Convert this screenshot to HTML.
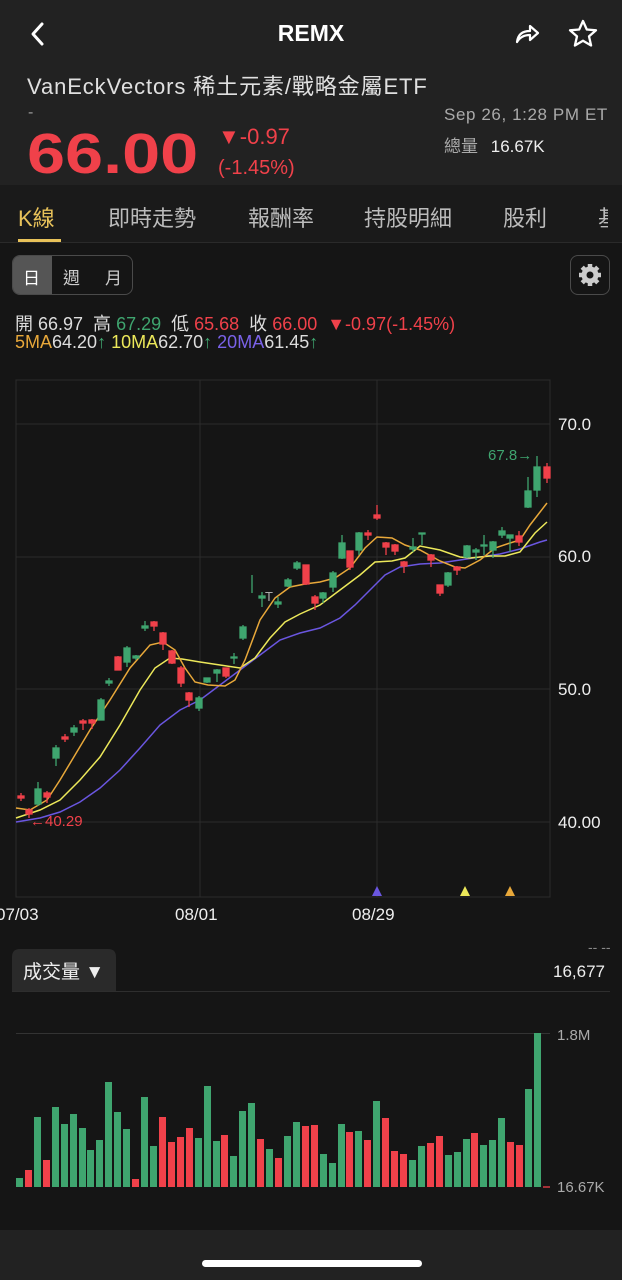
<!DOCTYPE html>
<html><head><meta charset="utf-8">
<style>
*{margin:0;padding:0;box-sizing:border-box}
body{width:622px;height:1280px;background:#151515;font-family:"Liberation Sans","Noto Sans CJK TC",sans-serif;color:#e6e6e6;position:relative;overflow:hidden}
.a{position:absolute;white-space:nowrap}
</style></head><body>
<div class="a" style="left:0;top:0;width:622px;height:185px;background:#222"></div>
<svg class="a" style="left:26px;top:20px" width="24" height="28" viewBox="0 0 24 28"><path d="M16 4 L7 14 L16 24" stroke="#fff" stroke-width="3" fill="none" stroke-linecap="round" stroke-linejoin="round"/></svg>
<div class="a" style="left:0;width:622px;text-align:center;top:20px;font-size:23px;font-weight:bold;color:#fff">REMX</div>
<svg class="a" style="left:513px;top:20px" width="28" height="28" viewBox="0 0 28 28"><path d="M4 22 C5 14 10 11 17 11 L17 6 L25 13 L17 20 L17 15 C11 15 7 17 4 22 Z" stroke="#fff" stroke-width="2.2" fill="none" stroke-linejoin="round"/></svg>
<svg class="a" style="left:567px;top:18px" width="32" height="32" viewBox="0 0 32 32"><path d="M16 3 L19.8 11.5 L29 12.3 L22 18.4 L24.1 27.5 L16 22.7 L7.9 27.5 L10 18.4 L3 12.3 L12.2 11.5 Z" stroke="#fff" stroke-width="2.3" fill="none" stroke-linejoin="round"/></svg>
<div class="a" style="left:27px;top:69px;font-size:22px;color:#e0e0e0;letter-spacing:0.9px">VanEckVectors 稀土元素/戰略金屬ETF</div>
<div class="a" style="left:28px;top:104px;font-size:16px;color:#999">-</div>
<div class="a" style="left:27px;top:121px;font-size:57px;font-weight:bold;color:#f0414a;transform:scaleX(1.2);transform-origin:left top">66.00</div>
<div class="a" style="left:218px;top:124px;font-size:22px;color:#f0414a">▼-0.97</div>
<div class="a" style="left:218px;top:157px;font-size:20px;color:#f0414a">(-1.45%)</div>
<div class="a" style="left:444px;top:105px;font-size:17px;color:#aaa;letter-spacing:0.6px">Sep 26, 1:28 PM ET</div>
<div class="a" style="left:444px;top:132px;font-size:17px;color:#aaa">總量 <span style="color:#eee;margin-left:8px">16.67K</span></div>
<div class="a" style="left:0;top:185px;width:622px;height:58px;background:#1a1a1a;border-bottom:1px solid #2a2a2a"></div>
<div class="a" style="left:18px;top:201px;font-size:22px;color:#e8c25a">K線</div>
<div class="a" style="left:18px;top:239px;width:43px;height:3px;background:#e8c25a"></div>
<div class="a" style="left:108px;top:201px;font-size:22px;color:#bbb">即時走勢</div>
<div class="a" style="left:248px;top:201px;font-size:22px;color:#bbb">報酬率</div>
<div class="a" style="left:364px;top:201px;font-size:22px;color:#bbb">持股明細</div>
<div class="a" style="left:503px;top:201px;font-size:22px;color:#bbb">股利</div>
<div class="a" style="left:598px;top:201px;font-size:22px;color:#bbb;width:10px;overflow:hidden">基</div>
<div class="a" style="left:12px;top:255px;width:121px;height:40px;border:1.5px solid #4a4a4a;border-radius:8px"></div>
<div class="a" style="left:13px;top:256px;width:39px;height:38px;background:#555;border-radius:7px 0 0 7px"></div>
<div class="a" style="left:23px;top:264px;font-size:17px;color:#fff">日</div>
<div class="a" style="left:63px;top:264px;font-size:17px;color:#ccc">週</div>
<div class="a" style="left:105px;top:264px;font-size:17px;color:#ccc">月</div>
<div class="a" style="left:570px;top:255px;width:40px;height:40px;border:1.5px solid #4a4a4a;border-radius:8px"></div>
<svg class="a" style="left:577px;top:262px" width="26" height="26" viewBox="0 0 26 26"><g fill="#ccc"><circle cx="13" cy="13" r="8.5"/><g stroke="#ccc" stroke-width="4.5"><line x1="13" y1="2" x2="13" y2="24"/><line x1="2" y1="13" x2="24" y2="13"/><line x1="5.2" y1="5.2" x2="20.8" y2="20.8"/><line x1="20.8" y1="5.2" x2="5.2" y2="20.8"/></g></g><circle cx="13" cy="13" r="3.5" fill="#151515"/></svg>
<div class="a" style="left:15px;top:310px;font-size:18px;color:#ddd">開 66.97 &nbsp;高 <span style="color:#3fa56f">67.29</span> &nbsp;低 <span style="color:#f0414a">65.68</span> &nbsp;收 <span style="color:#f0414a">66.00 &nbsp;▼-0.97(-1.45%)</span></div>
<div class="a" style="left:15px;top:332px;font-size:18px;color:#ddd"><span style="color:#e8a83a">5MA</span>64.20<span style="color:#3fa56f">↑</span> <span style="color:#ece85a">10MA</span>62.70<span style="color:#3fa56f">↑</span> <span style="color:#7a62e8">20MA</span>61.45<span style="color:#3fa56f">↑</span></div>

<svg class="a" style="left:0;top:0" width="622" height="1280" viewBox="0 0 622 1280">
<g stroke="#2c2c2c" stroke-width="1" fill="none">
<rect x="16" y="380" width="534" height="517"/>
<line x1="16" y1="424" x2="550" y2="424"/><line x1="16" y1="557" x2="550" y2="557"/><line x1="16" y1="689" x2="550" y2="689"/><line x1="16" y1="822" x2="550" y2="822"/>
<line x1="200" y1="380" x2="200" y2="897"/><line x1="377" y1="380" x2="377" y2="897"/>
</g>
<g font-size="17" fill="#eee" font-family="Liberation Sans,sans-serif">
<text x="558" y="430">70.0</text><text x="558" y="562">60.0</text><text x="558" y="695">50.0</text><text x="558" y="828">40.00</text>
<text x="-4" y="920">07/03</text><text x="175" y="920">08/01</text><text x="352" y="920">08/29</text>
<text x="553" y="977">16,677</text>
</g>
<text x="488" y="460" font-size="15" fill="#3fa56f" font-family="Liberation Sans,sans-serif">67.8→</text>
<text x="30" y="826" font-size="15" fill="#f0414a" font-family="Liberation Sans,sans-serif">←40.29</text>
<polygon points="372,896 377,886 382,896" fill="#6a56e0"/>
<polygon points="460,896 465,886 470,896" fill="#ece85a"/>
<polygon points="505,896 510,886 515,896" fill="#e8a83a"/>
<g fill="none" stroke-width="1.5">
<polyline stroke="#6a56e0" points="16,822 40,818 60,812 80,802 100,788 120,770 140,748 160,725 180,710 200,700 220,685 240,670 260,655 280,640 300,633 320,628 340,618 355,605 370,590 385,575 400,567 420,564 440,563 460,560 480,557 500,554 520,549 540,542 547,540"/>
<polyline stroke="#ece85a" points="16,818 40,810 60,800 80,780 100,757 120,725 140,690 155,668 170,658 182,659 200,662 220,665 240,668 255,658 270,638 285,622 300,614 320,605 340,590 360,575 375,562 392,561 405,558 420,546 440,550 460,557 470,558 490,556 505,556 520,552 535,533 547,522"/>
<polyline stroke="#e8a83a" points="16,808 30,810 47,800 60,780 75,755 90,730 110,700 130,668 150,645 163,642 175,650 185,668 195,682 208,685 225,686 235,680 245,660 260,620 275,598 290,587 305,584 320,582 335,578 350,568 365,548 377,537 392,538 405,545 420,550 440,561 455,567 465,568 480,560 495,548 510,543 520,540 530,525 547,503"/>
</g>
<g stroke="#3fa56f" stroke-width="1.3" fill="#3fa56f">
<line x1="38" y1="782" x2="38" y2="806"/><rect x="35" y="789" width="6" height="15"/>
<line x1="56" y1="745" x2="56" y2="766"/><rect x="53" y="748" width="6" height="10"/>
<line x1="74" y1="725" x2="74" y2="736"/><rect x="71" y="728" width="6" height="4"/>
<line x1="101" y1="698" x2="101" y2="720"/><rect x="98" y="700" width="6" height="20"/>
<line x1="109" y1="678" x2="109" y2="686"/><rect x="106" y="681" width="6" height="2"/>
<line x1="127" y1="646" x2="127" y2="667"/><rect x="124" y="648" width="6" height="14"/>
<line x1="136" y1="655" x2="136" y2="660"/><rect x="133" y="656" width="6" height="2"/>
<line x1="145" y1="621" x2="145" y2="631"/><rect x="142" y="626" width="6" height="2"/>
<line x1="199" y1="696" x2="199" y2="711"/><rect x="196" y="698" width="6" height="10"/>
<line x1="207" y1="678" x2="207" y2="683"/><rect x="204" y="678" width="6" height="4"/>
<line x1="217" y1="669" x2="217" y2="682"/><rect x="214" y="670" width="6" height="3"/>
<line x1="234" y1="653" x2="234" y2="664"/><rect x="231" y="657" width="6" height="1"/>
<line x1="243" y1="625" x2="243" y2="640"/><rect x="240" y="627" width="6" height="11"/>
<line x1="252" y1="575" x2="252" y2="593"/>
<line x1="262" y1="592" x2="262" y2="607"/><rect x="259" y="596" width="6" height="2"/>
<line x1="278" y1="597" x2="278" y2="608"/><rect x="275" y="602" width="6" height="2"/>
<line x1="288" y1="578" x2="288" y2="587"/><rect x="285" y="580" width="6" height="6"/>
<line x1="297" y1="561" x2="297" y2="570"/><rect x="294" y="563" width="6" height="5"/>
<line x1="323" y1="592" x2="323" y2="603"/><rect x="320" y="593" width="6" height="5"/>
<line x1="333" y1="571" x2="333" y2="592"/><rect x="330" y="573" width="6" height="14"/>
<line x1="342" y1="535" x2="342" y2="559"/><rect x="339" y="543" width="6" height="15"/>
<line x1="359" y1="532" x2="359" y2="555"/><rect x="356" y="533" width="6" height="17"/>
<line x1="413" y1="538" x2="413" y2="552"/><rect x="410" y="547" width="6" height="2"/>
<line x1="422" y1="533" x2="422" y2="545"/><rect x="419" y="533" width="6" height="1"/>
<line x1="448" y1="572" x2="448" y2="587"/><rect x="445" y="573" width="6" height="12"/>
<line x1="467" y1="545" x2="467" y2="558"/><rect x="464" y="546" width="6" height="11"/>
<line x1="476" y1="548" x2="476" y2="560"/><rect x="473" y="550" width="6" height="2"/>
<line x1="484" y1="535" x2="484" y2="555"/><rect x="481" y="545" width="6" height="1"/>
<line x1="493" y1="541" x2="493" y2="558"/><rect x="490" y="542" width="6" height="8"/>
<line x1="502" y1="527" x2="502" y2="538"/><rect x="499" y="531" width="6" height="4"/>
<line x1="510" y1="535" x2="510" y2="552"/><rect x="507" y="535" width="6" height="3"/>
<line x1="528" y1="477" x2="528" y2="508"/><rect x="525" y="491" width="6" height="16"/>
<line x1="537" y1="456" x2="537" y2="497"/><rect x="534" y="467" width="6" height="23"/>
</g>
<g stroke="#f0414a" stroke-width="1.3" fill="#f0414a">
<line x1="21" y1="793" x2="21" y2="801"/><rect x="18" y="796" width="6" height="2"/>
<line x1="29" y1="808" x2="29" y2="818"/><rect x="26" y="810" width="6" height="4"/>
<line x1="47" y1="791" x2="47" y2="803"/><rect x="44" y="793" width="6" height="4"/>
<line x1="65" y1="734" x2="65" y2="742"/><rect x="62" y="737" width="6" height="2"/>
<line x1="83" y1="719" x2="83" y2="730"/><rect x="80" y="721" width="6" height="2"/>
<line x1="92" y1="719" x2="92" y2="729"/><rect x="89" y="720" width="6" height="3"/>
<line x1="118" y1="656" x2="118" y2="670"/><rect x="115" y="657" width="6" height="13"/>
<line x1="154" y1="621" x2="154" y2="631"/><rect x="151" y="622" width="6" height="4"/>
<line x1="163" y1="632" x2="163" y2="650"/><rect x="160" y="633" width="6" height="11"/>
<line x1="172" y1="650" x2="172" y2="664"/><rect x="169" y="651" width="6" height="12"/>
<line x1="181" y1="666" x2="181" y2="687"/><rect x="178" y="668" width="6" height="15"/>
<line x1="189" y1="692" x2="189" y2="707"/><rect x="186" y="693" width="6" height="7"/>
<line x1="226" y1="668" x2="226" y2="678"/><rect x="223" y="668" width="6" height="8"/>
<line x1="306" y1="565" x2="306" y2="585"/><rect x="303" y="565" width="6" height="19"/>
<line x1="315" y1="595" x2="315" y2="610"/><rect x="312" y="597" width="6" height="6"/>
<line x1="350" y1="551" x2="350" y2="570"/><rect x="347" y="551" width="6" height="16"/>
<line x1="368" y1="530" x2="368" y2="540"/><rect x="365" y="533" width="6" height="2"/>
<line x1="377" y1="505" x2="377" y2="520"/><rect x="374" y="515" width="6" height="3"/>
<line x1="386" y1="542" x2="386" y2="555"/><rect x="383" y="543" width="6" height="4"/>
<line x1="395" y1="544" x2="395" y2="555"/><rect x="392" y="545" width="6" height="6"/>
<line x1="404" y1="561" x2="404" y2="573"/><rect x="401" y="562" width="6" height="4"/>
<line x1="431" y1="554" x2="431" y2="567"/><rect x="428" y="555" width="6" height="5"/>
<line x1="440" y1="585" x2="440" y2="596"/><rect x="437" y="585" width="6" height="8"/>
<line x1="457" y1="566" x2="457" y2="575"/><rect x="454" y="567" width="6" height="3"/>
<line x1="519" y1="531" x2="519" y2="546"/><rect x="516" y="536" width="6" height="6"/>
<line x1="547" y1="463" x2="547" y2="483"/><rect x="544" y="467" width="6" height="11"/>
</g>
<text x="265" y="601" font-size="13" fill="#aaa" font-family="Liberation Sans,sans-serif">T</text>

<text x="588" y="952" font-size="14" fill="#888" font-family="Liberation Sans,sans-serif">-- --</text>
<path d="M12 991 V957 Q12 949 20 949 H108 Q116 949 116 957 V991 Z" fill="#2a2a2a"/>
<text x="23" y="978" font-size="19" fill="#eee">成交量 ▼</text>
<line x1="12" y1="991.5" x2="610" y2="991.5" stroke="#2e2e2e"/>
<line x1="16" y1="1033.5" x2="550" y2="1033.5" stroke="#333"/>
<line x1="543" y1="1187" x2="550" y2="1187" stroke="#f0414a" stroke-width="1.3"/>
<text x="557" y="1040" font-size="15" fill="#aaa" font-family="Liberation Sans,sans-serif">1.8M</text>
<text x="557" y="1192" font-size="15" fill="#aaa" font-family="Liberation Sans,sans-serif">16.67K</text>
<g fill="#3fa56f">
<rect x="16" y="1178" width="7" height="9"/><rect x="34" y="1117" width="7" height="70"/><rect x="52" y="1107" width="7" height="80"/><rect x="61" y="1124" width="7" height="63"/><rect x="70" y="1114" width="7" height="73"/><rect x="79" y="1128" width="7" height="59"/><rect x="87" y="1150" width="7" height="37"/><rect x="96" y="1140" width="7" height="47"/><rect x="105" y="1082" width="7" height="105"/><rect x="114" y="1112" width="7" height="75"/><rect x="123" y="1129" width="7" height="58"/><rect x="141" y="1097" width="7" height="90"/><rect x="150" y="1146" width="7" height="41"/><rect x="195" y="1138" width="7" height="49"/><rect x="204" y="1086" width="7" height="101"/><rect x="213" y="1141" width="7" height="46"/><rect x="230" y="1156" width="7" height="31"/><rect x="239" y="1111" width="7" height="76"/><rect x="248" y="1103" width="7" height="84"/><rect x="266" y="1149" width="7" height="38"/><rect x="284" y="1136" width="7" height="51"/><rect x="293" y="1122" width="7" height="65"/><rect x="320" y="1154" width="7" height="33"/><rect x="329" y="1163" width="7" height="24"/><rect x="338" y="1124" width="7" height="63"/><rect x="355" y="1131" width="7" height="56"/><rect x="373" y="1101" width="7" height="86"/><rect x="409" y="1160" width="7" height="27"/><rect x="418" y="1146" width="7" height="41"/><rect x="445" y="1155" width="7" height="32"/><rect x="454" y="1152" width="7" height="35"/><rect x="463" y="1139" width="7" height="48"/><rect x="480" y="1145" width="7" height="42"/><rect x="489" y="1140" width="7" height="47"/><rect x="498" y="1118" width="7" height="69"/><rect x="525" y="1089" width="7" height="98"/><rect x="534" y="1033" width="7" height="154"/>
</g>
<g fill="#f0414a">
<rect x="25" y="1170" width="7" height="17"/><rect x="43" y="1160" width="7" height="27"/><rect x="132" y="1179" width="7" height="8"/><rect x="159" y="1117" width="7" height="70"/><rect x="168" y="1142" width="7" height="45"/><rect x="177" y="1137" width="7" height="50"/><rect x="186" y="1128" width="7" height="59"/><rect x="221" y="1135" width="7" height="52"/><rect x="257" y="1139" width="7" height="48"/><rect x="275" y="1158" width="7" height="29"/><rect x="302" y="1126" width="7" height="61"/><rect x="311" y="1125" width="7" height="62"/><rect x="346" y="1132" width="7" height="55"/><rect x="364" y="1140" width="7" height="47"/><rect x="382" y="1118" width="7" height="69"/><rect x="391" y="1151" width="7" height="36"/><rect x="400" y="1154" width="7" height="33"/><rect x="427" y="1143" width="7" height="44"/><rect x="436" y="1136" width="7" height="51"/><rect x="471" y="1133" width="7" height="54"/><rect x="507" y="1142" width="7" height="45"/><rect x="516" y="1145" width="7" height="42"/>
</g>
</svg>
<div class="a" style="left:0;top:1230px;width:622px;height:50px;background:#222"></div>
<div class="a" style="left:202px;top:1260px;width:220px;height:7px;background:#fff;border-radius:4px"></div>
</body></html>
